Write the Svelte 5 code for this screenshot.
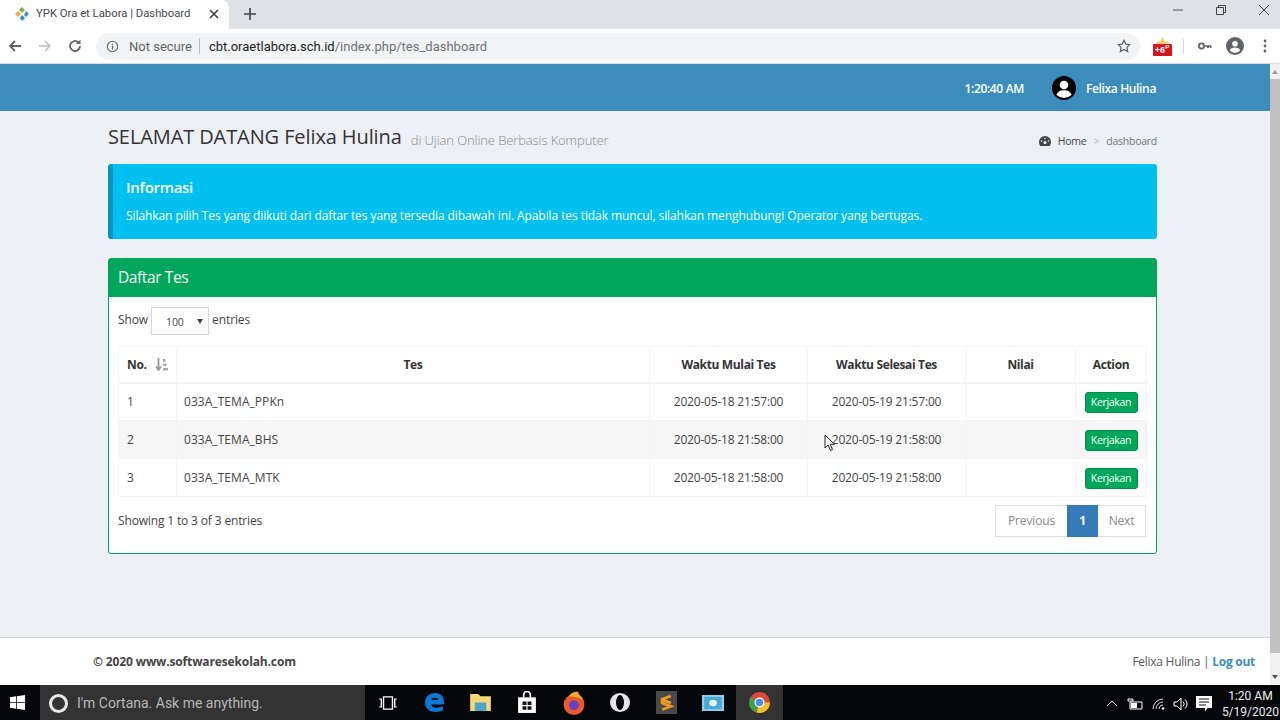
<script>
  const rows = [
    { no: 1, name: '033A_TEMA_PPKn', start: '2020-05-18 21:57:00', end: '2020-05-19 21:57:00' },
    { no: 2, name: '033A_TEMA_BHS', start: '2020-05-18 21:58:00', end: '2020-05-19 21:58:00' },
    { no: 3, name: '033A_TEMA_MTK', start: '2020-05-18 21:58:00', end: '2020-05-19 21:58:00' }
  ];
</script>

<div class="screen">
  <header class="tabstrip">
    <div class="tab">
      <svg class="favicon" viewBox="0 0 16 16" width="16" height="16">
        <path d="M8 1l3 3-3 3-3-3z" fill="#7cb342" />
        <path d="M4 5l3 3-3 3-3-3z" fill="#f2a73b" />
        <path d="M12 5l3 3-3 3-2-2z" fill="#3f8fd2" />
        <path d="M8 9l3 3-3 3-2-3z" fill="#2f86cf" />
      </svg>
      <span class="tabtitle">YPK Ora et Labora | Dashboard</span>
      <svg class="tabclose" viewBox="0 0 10 10" width="10" height="10"><path d="M1 1l8 8M9 1l-8 8" stroke="#3c4043" stroke-width="1.6" /></svg>
    </div>
    <svg class="newtab" viewBox="0 0 12 12" width="12" height="12"><path d="M6 0v12M0 6h12" stroke="#3c4043" stroke-width="1.6" /></svg>
    <div class="winbtns">
      <svg viewBox="0 0 12 12" width="12" height="12"><path d="M1 6h10" stroke="#555" stroke-width="1" /></svg>
      <svg viewBox="0 0 12 12" width="12" height="12"><path d="M1.5 3.5h7v7h-7zM3.5 3.5v-2h7v7h-2" fill="none" stroke="#444" stroke-width="1" /></svg>
      <svg viewBox="0 0 12 12" width="12" height="12"><path d="M1 1l10 10M11 1l-10 10" stroke="#444" stroke-width="1" /></svg>
    </div>
  </header>

  <div class="toolbar">
    <svg class="navicon" viewBox="0 0 16 16" width="16" height="16"><path d="M14 8H3M8 3L3 8l5 5" fill="none" stroke="#5f6368" stroke-width="1.8" /></svg>
    <svg class="navicon" viewBox="0 0 16 16" width="16" height="16"><path d="M2 8h11M8 3l5 5-5 5" fill="none" stroke="#bcbfc4" stroke-width="1.6" /></svg>
    <svg class="navicon" viewBox="0 0 16 16" width="16" height="16"><path d="M13 8a5 5 0 1 1-1.5-3.6" fill="none" stroke="#5f6368" stroke-width="1.8" /><path d="M13.5 1.5v4.5H9z" fill="#5f6368" /></svg>
    <div class="omnibox">
      <svg viewBox="0 0 14 14" width="13" height="13"><circle cx="7" cy="7" r="5.6" fill="none" stroke="#5f6368" stroke-width="1.2" /><path d="M7 6.2v4M7 3.8v1.3" stroke="#5f6368" stroke-width="1.3" /></svg>
      <span class="insecure">Not secure</span>
      <span class="omnisep"></span>
      <span class="url"><b>cbt.oraetlabora.sch.id</b>/index.php/tes_dashboard</span>
      <svg class="star" viewBox="0 0 16 16" width="14" height="14"><path d="M8 1.5l2 4.3 4.7.6-3.4 3.2.9 4.7L8 11.9l-4.2 2.4.9-4.7L1.3 6.4 6 5.8z" fill="none" stroke="#5f6368" stroke-width="1.4" /></svg>
    </div>
    <div class="exts">
      <span class="promo">
        <svg viewBox="0 0 20 8" width="19" height="8"><path d="M3 8l2-3 2 1 3-5 3 5 2-1 2 3z" fill="#f7c766" /></svg>
        <span class="promotag">+6<sup>P</sup></span>
      </span>
      <span class="extsep"></span>
      <svg viewBox="0 0 14 8" width="14" height="8"><circle cx="3.5" cy="4" r="2.6" fill="none" stroke="#5f6368" stroke-width="1.7" /><path d="M6 3.2h7.5v2.8H12V4.800h-1V6H9V4.800H6z" fill="#5f6368" /></svg>
      <svg class="account" viewBox="0 0 18 18" width="18" height="18"><circle cx="9" cy="9" r="9" fill="#5f6368" /><circle cx="9" cy="6.8" r="2.8" fill="#fff" /><path d="M3.8 13.2c1-2 3.2-2.6 5.2-2.6s4.2.6 5.2 2.6A6.8 6.8 0 0 1 9 16a6.8 6.8 0 0 1-5.200-2.800z" fill="#fff" /></svg>
      <svg class="dots" viewBox="0 0 4 14" width="4" height="14"><circle cx="2" cy="2" r="1.4" fill="#5f6368" /><circle cx="2" cy="7" r="1.4" fill="#5f6368" /><circle cx="2" cy="12" r="1.4" fill="#5f6368" /></svg>
    </div>
  </div>

  <div class="viewport">
    <div class="page">
      <nav class="navbar">
        <span class="clock">1:20:40 AM</span>
        <svg class="avatar" viewBox="0 0 24 24" width="24" height="24"><circle cx="12" cy="12" r="12" fill="#000" /><circle cx="12" cy="9" r="4.300" fill="#fff" /><path d="M4.500 19c1-3.500 4-4.800 7.500-4.800s6.500 1.300 7.500 4.800a11 11 0 0 1-15 0z" fill="#fff" /></svg>
        <span class="username">Felixa Hulina</span>
      </nav>

      <main class="content">
        <div class="headline">
          <h1>SELAMAT DATANG Felixa Hulina <small>di Ujian Online Berbasis Komputer</small></h1>
          <div class="crumbs">
            <svg viewBox="0 0 12 10" width="12" height="10"><path d="M6 0a6 6 0 0 0-6 6c0 1.500.5 3 1.500 4h9c1-1 1.500-2.500 1.500-4a6 6 0 0 0-6-6z" fill="#444" /><circle cx="6" cy="6.500" r="1.500" fill="#ecf0f5" /><circle cx="2.500" cy="5" r=".8" fill="#ecf0f5" /><circle cx="9.500" cy="5" r=".8" fill="#ecf0f5" /><circle cx="6" cy="2.500" r=".8" fill="#ecf0f5" /></svg>
            <span class="home">Home</span>
            <span class="gt">&gt;</span>
            <span class="here">dashboard</span>
          </div>
        </div>

        <section class="callout">
          <h4>Informasi</h4>
          <p>Silahkan pilih Tes yang diikuti dari daftar tes yang tersedia dibawah ini. Apabila tes tidak muncul, silahkan menghubungi Operator yang bertugas.</p>
        </section>

        <section class="box">
          <h3 class="boxhead">Daftar Tes</h3>
          <div class="boxbody">
            <div class="length">
              <span class="lbl">Show</span>
              <span class="select">100 <i class="caret"></i></span>
              <span class="lbl">entries</span>
            </div>
            <table>
              <colgroup>
                <col class="c1" /><col class="c2" /><col class="c3" /><col class="c4" /><col class="c5" /><col class="c6" />
              </colgroup>
              <thead>
                <tr>
                  <th class="left">
                    <span class="thno">No.
                      <svg viewBox="0 0 13 13" width="13" height="13"><path d="M3.500 0v11M1 8.500L3.500 12 6 8.500" fill="none" stroke="#999" stroke-width="1.800" /><path d="M8 1h2.500v3H8zM8 5.500h3.500v2.500H8zM8 10h5v2.500H8z" fill="#aaa" /></svg>
                    </span>
                  </th>
                  <th>Tes</th>
                  <th>Waktu Mulai Tes</th>
                  <th>Waktu Selesai Tes</th>
                  <th>Nilai</th>
                  <th>Action</th>
                </tr>
              </thead>
              <tbody>
                {#each rows as r}
                  <tr>
                    <td class="num">{r.no}</td>
                    <td class="name">{r.name}</td>
                    <td class="mid">{r.start}</td>
                    <td class="mid">{r.end}</td>
                    <td></td>
                    <td class="mid"><button class="work">Kerjakan</button></td>
                  </tr>
                {/each}
              </tbody>
            </table>
            <div class="tablefoot">
              <span class="info">Showing 1 to 3 of 3 entries</span>
              <div class="pager">
                <span class="pg first">Previous</span>
                <span class="pg active">1</span>
                <span class="pg last">Next</span>
              </div>
            </div>
          </div>
        </section>
      </main>

      <footer class="footer">
        <strong>© 2020 www.softwaresekolah.com</strong>
        <span class="who">Felixa Hulina | <b>Log out</b></span>
      </footer>

      <svg class="cursor" viewBox="0 0 12 18" width="12" height="18"><path d="M1 1v13l3.200-3 2.300 5.500 2-.9-2.300-5.300H10.500z" fill="#fff" stroke="#222" stroke-width="1" /></svg>
    </div>

    <aside class="scrollbar">
      <i class="up"></i>
      <div class="thumb"></div>
      <i class="down"></i>
    </aside>
  </div>

  <footer class="taskbar">
    <span class="start">
      <svg viewBox="0 0 16 16" width="15" height="15"><path d="M0 2.300l6.500-.9v6.200H0zM7.300 1.300L16 0v7.600H7.300zM0 8.400h6.500v6.200L0 13.700zM7.300 8.400H16V16l-8.700-1.300z" fill="#fff" /></svg>
    </span>
    <div class="cortana">
      <span class="ring"></span>
      <span>I'm Cortana. Ask me anything.</span>
    </div>
    <div class="apps">
      <span class="app"><svg viewBox="0 0 18 16" width="20" height="14" preserveAspectRatio="none"><path d="M5 1h8v14H5zM1 3.500h2v9H1M17 3.500h-2v9h2" fill="none" stroke="#fff" stroke-width="1.200" /></svg></span>
      <span class="app"><svg viewBox="0 0 20 22" width="21" height="21" preserveAspectRatio="none"><path d="M1 11C1 4 6 1 11 1c5 0 8 4 8 10v2H7c.5 3.500 5.500 4.500 11 2v4.500c-7 3-17 1.500-17-8.500zM7 8.500h6.500C13.500 5.500 7.800 5.200 7 8.500z" fill="#0a78d4" /></svg></span>
      <span class="app"><svg viewBox="0 0 20 18" width="23" height="19" preserveAspectRatio="none"><path d="M1 1h7l2 2h9v14H1z" fill="#f8d876" /><path d="M5 9h10v8H5z" fill="#48a6c9" /></svg></span>
      <span class="app"><svg viewBox="0 0 18 22" width="20" height="23" preserveAspectRatio="none"><path d="M1 6h16v15H1z" fill="#fff" /><path d="M6 6V3.500a3 3 0 0 1 6 0V6" fill="none" stroke="#fff" stroke-width="1.500" /><path d="M5 10h3.500v3.500H5zM9.500 10H13v3.500H9.500zM5 14.500h3.500V18H5zM9.500 14.500H13V18H9.500z" fill="#111" /></svg></span>
      <span class="app"><svg viewBox="0 0 22 22" width="24" height="24"><circle cx="11" cy="12.500" r="9.500" fill="#ea5a2d" /><path d="M6 5c2-3 6-5 9-4-1 2 3 3 5 8-3-3-8-4-14-4z" fill="#fca926" /><circle cx="11" cy="13" r="4.500" fill="#6b3fc4" /></svg></span>
      <span class="app"><span class="opera"></span></span>
      <span class="app"><svg viewBox="0 0 17 21" width="21" height="23" preserveAspectRatio="none"><path d="M0 0h17v21H0z" fill="#4a4a4a" /><path d="M12 4.500L5 7.500v3.500l7 3-7 3M5 8l7 3" fill="none" stroke="#f49b1c" stroke-width="2.400" /></svg></span>
      <span class="app"><svg viewBox="0 0 20 17" width="22" height="16" preserveAspectRatio="none"><path d="M0 0h20v17H0z" fill="#8fd0ea" /><path d="M2 2h16v13H2z" fill="#4aa8d8" /><circle cx="10" cy="8.500" r="3.500" fill="#e8f5fb" /></svg></span>
      <span class="app current"><svg viewBox="0 0 22 22" width="23" height="23"><circle cx="11" cy="11" r="10" fill="#d94a3a" /><path d="M11 11L21 11A10 10 0 0 1 8 20.500z" fill="#f6c02c" /><path d="M11 11L8 20.500A10 10 0 0 1 2.300 6z" fill="#3c9f4a" /><circle cx="11" cy="11" r="4.800" fill="#fff" /><circle cx="11" cy="11" r="3.600" fill="#4a8fe8" /></svg></span>
    </div>
    <div class="tray">
      <svg viewBox="0 0 12 7" width="12" height="7"><path d="M1 6l5-5 5 5" fill="none" stroke="#fff" stroke-width="1" /></svg>
      <svg viewBox="0 0 16 12" width="16" height="12"><path d="M3 4h12v7H3zM1 1h5v2H1z" fill="none" stroke="#fff" stroke-width="1" /><path d="M4 5h6v5H4z" fill="#fff" /></svg>
      <svg viewBox="0 0 14 12" width="14" height="12"><path d="M1 11a10 10 0 0 1 10-10M4 11a7 7 0 0 1 7-7M7 11a4 4 0 0 1 4-4" fill="none" stroke="#ddd" stroke-width="1" /><circle cx="11" cy="10.500" r="1.300" fill="#fff" /></svg>
      <svg class="speaker" viewBox="0 0 16 14" width="16" height="14"><path d="M1 5h3l4-4v12l-4-4H1zM10 4.500a3.500 3.500 0 0 1 0 5M12 2.500a6 6 0 0 1 0 9" fill="none" stroke="#fff" stroke-width="1" /></svg>
      <svg class="note" viewBox="0 0 16 16" width="16" height="16"><path d="M0 0h16v12h-4.500L9 15.500V12H0z" fill="#fff" /><path d="M3 3h10M3 6h10M3 9h7" stroke="#111" stroke-width="1" /></svg>
      <div class="time"><span>1:20 AM</span><span>5/19/2020</span></div>
    </div>
  </footer>
</div>

<style>
  :global(body) { margin: 0; }
  .screen {
    width: 1280px; height: 720px; overflow: hidden;
    display: flex; flex-direction: column;
    font-family: "Open Sans", "Noto Sans", sans-serif;
    color: #333;
  }

  .tabstrip { height: 29px; flex: none; background: #dee1e6; display: flex; align-items: flex-end; box-sizing: border-box; }
  .tab {
    width: 229px; height: 29px; box-sizing: border-box;
    background: #fff; border-radius: 0 8px 0 0;
    display: flex; align-items: center; padding: 0 10px 2px 14px;
  }
  .favicon { flex: none; margin-right: 6px; }
  .tabtitle { font: 11.3px "Roboto", sans-serif; color: #45484c; flex: 1; white-space: nowrap; }
  .newtab { margin: 0 0 9px 15px; }
  .winbtns { margin-left: auto; display: flex; gap: 31px; align-self: flex-start; padding: 4px 10px 0 0; }

  .toolbar { height: 35px; flex: none; background: #fff; display: flex; align-items: center; padding-left: 7px; box-sizing: border-box; border-bottom: 1px solid #d8dade; }
  .navicon { flex: none; margin-right: 14px; }
  .omnibox {
    width: 1044px; height: 27px; box-sizing: border-box; margin-left: -1px;
    background: #f1f3f4; border-radius: 14px;
    display: flex; align-items: center; padding: 0 9px 0 10px;
    font: 13px "Roboto", sans-serif; white-space: nowrap;
  }
  .insecure { color: #5f6368; margin-left: 10px; font-size: 13px; }
  .omnisep { width: 1px; height: 16px; background: #b8bbbf; margin: 0 9px 0 7px; }
  .url { color: #6f7377; flex: 1; }
  .url b { font-weight: 400; color: #202124; }
  .star { margin-left: auto; }
  .exts { display: flex; align-items: center; margin-left: 12px; }
  .promo { width: 20px; display: flex; flex-direction: column; align-items: center; margin-right: 11px; }
  .promotag { display: block; width: 19px; height: 12px; background: #d9131e; color: #fff; font: 700 9px/12px "Liberation Sans", sans-serif; text-align: center; border-radius: 1px; }
  .promotag sup { font-size: 6px; line-height: 0; }
  .extsep { width: 1px; height: 15px; background: #d6d8da; margin-right: 14px; }
  .account { margin-left: 14px; }
  .dots { margin-left: 19px; }

  .viewport { flex: 1; min-height: 0; display: flex; }
  .page { flex: 1; min-width: 0; display: flex; flex-direction: column; background: #ecf0f5; position: relative; }
  .navbar {
    height: 47px; flex: none; box-sizing: border-box; background: #3c8dbc; color: #fff;
    display: flex; align-items: center; padding: 1px 114px 0 0;
    justify-content: flex-end; font-size: 12px; font-weight: 600;
    letter-spacing: -0.35px;
  }
  .clock { margin-right: 28px; }
  .avatar { margin-right: 10px; margin-top: -1px; }

  .content { flex: 1; min-height: 0; padding: 0 113px 0 108px; }
  .headline { height: 53px; display: flex; align-items: flex-end; justify-content: space-between; padding-bottom: 10px; box-sizing: border-box; }
  h1 { margin: 0; font-size: 20px; line-height: 28px; font-weight: 400; color: #333; letter-spacing: -0.1px; white-space: nowrap; }
  h1 small { font-size: 13px; font-weight: 300; color: #8a8a8a; margin-left: 4px; letter-spacing: -0.1px; vertical-align: -1px; }
  .crumbs { display: flex; align-items: center; font-size: 10.5px; color: #777; padding: 0 0 6px 0; letter-spacing: -0.25px; }
  .crumbs svg { margin-right: 7px; }
  .home { color: #444; }
  .gt { color: #bbb; margin: 0 7px; }
  .here { color: #777; }

  .callout {
    height: 75px; box-sizing: border-box; background: #00c0ef; color: #fff;
    border-left: 5px solid #0097bc; border-radius: 3px; padding: 13px 18px 0 13px;
    margin-bottom: 19px;
  }
  .callout h4 { margin: 0 0 10px; font-size: 15px; line-height: 20px; font-weight: 600; letter-spacing: -0.3px; }
  .callout p { margin: 0; font-size: 12px; line-height: 17px; font-weight: 500; letter-spacing: -0.08px; white-space: nowrap; }

  .box { background: #fff; border: 1px solid #00a65a; border-radius: 3px; height: 296px; box-sizing: border-box; }
  .boxhead { margin: 0; height: 38px; background: #00a65a; color: #fff; font-size: 15.5px; font-weight: 400; line-height: 37px; padding-left: 9px; letter-spacing: -0.4px; }
  .boxbody { padding: 9px 10px 0 9px; }
  .length { display: flex; align-items: center; gap: 3px; height: 29px; font-size: 12px; color: #444; letter-spacing: -0.1px; }
  .lbl { padding-bottom: 2px; }
  .select { width: 58px; height: 28px; box-sizing: border-box; border: 1px solid #d2d6de; padding: 3px 0 0 14px; font-size: 10.5px; display: flex; align-items: center; position: relative; color: #444; }
  .caret { position: absolute; right: 5px; top: 11px; border: 3.5px solid transparent; border-top: 5px solid #444; border-bottom: 0; }

  table { width: 1028px; margin-top: 11px; border-collapse: collapse; table-layout: fixed; font-size: 12px; color: #444; letter-spacing: -0.2px; }
  .c1 { width: 58px; } .c2 { width: 473px; } .c3 { width: 158px; } .c4 { width: 158px; } .c5 { width: 110px; } .c6 { width: 71px; }
  th, td { border: 1px solid #f4f4f4; padding: 0; box-sizing: border-box; }
  th { height: 36px; border-bottom: 2px solid #f4f4f4; font-weight: 700; text-align: center; color: #333; letter-spacing: -0.35px; }
  th.left { text-align: left; padding-left: 8px; }
  .thno { display: flex; align-items: center; gap: 8px; }
  td { height: 38px; }
  tbody tr:nth-child(2) { background: #f6f6f6; }
  .num { padding-left: 8px; }
  .name { padding-left: 7px; letter-spacing: 0.05px; }
  .mid { text-align: center; }
  .work { width: 53px; height: 21px; padding: 0; border: 1px solid #008d4c; border-radius: 3px; background: #00a65a; color: #fff; font: 500 10.5px "Open Sans", sans-serif; letter-spacing: -0.3px; display: block; margin: 1px auto 0; }

  .tablefoot { display: flex; justify-content: space-between; align-items: center; margin-top: 8px; font-size: 12px; color: #444; letter-spacing: -0.15px; }
  .info { padding-bottom: 2px; }
  .pager { display: flex; }
  .pg { height: 32px; box-sizing: border-box; border: 1px solid #ddd; color: #888; line-height: 30px; text-align: center; background: #fff; }
  .first { width: 72px; border-right: 0; }
  .active { width: 31px; background: #337ab7; border-color: #337ab7; color: #fff; font-weight: 700; }
  .last { width: 48px; border-left: 0; }

  .footer {
    height: 48px; flex: none; box-sizing: border-box; background: #fff; border-top: 1px solid #d2d6de;
    display: flex; align-items: center; justify-content: space-between;
    padding: 0 15px 0 93px; font-size: 12px; color: #444;
  }
  .footer strong { letter-spacing: -0.13px; }
  .who { color: #555; letter-spacing: -0.27px; }
  .who b { color: #3c8dbc; }
  .cursor { position: absolute; left: 824px; top: 370px; }

  .scrollbar { width: 10px; flex: none; background: #f1f1f1; display: flex; flex-direction: column; align-items: center; }
  .thumb { height: 574px; width: 100%; background: #c1c1c1; margin: 5px 0 auto; }
  .up { margin-top: 6px; border: 3.5px solid transparent; border-bottom: 4px solid #9a9a9a; border-top: 0; }
  .down { margin-bottom: 6px; border: 3.5px solid transparent; border-top: 4px solid #505050; border-bottom: 0; }

  .taskbar { height: 35px; flex: none; background: #05060a; display: flex; align-items: center; color: #fff; }
  .start { width: 40px; box-sizing: border-box; padding-right: 6px; display: flex; justify-content: center; flex: none; }
  .cortana { width: 325px; height: 35px; box-sizing: border-box; background: #333; display: flex; align-items: center; padding: 1px 0 0 9px; gap: 9px; font: 14px "Roboto", sans-serif; color: #b8b8b8; flex: none; }
  .ring { width: 13px; height: 13px; border: 3px solid #e9e9e9; border-radius: 50%; box-sizing: content-box; }
  .apps { display: flex; align-items: center; height: 100%; }
  .app { width: 46.4px; height: 35px; display: flex; align-items: center; justify-content: center; }
  .current { background: #333; }
  .opera { width: 8px; height: 15px; border-style: solid; border-color: #e6e6e6; border-width: 2px 6px; border-radius: 50%; }
  .tray { margin-left: auto; display: flex; align-items: center; gap: 9px; padding: 2px 1px 0 0; }
  .speaker { margin-left: -2px; }
  .note { margin: 0 1px 0 -2px; }
  .time { display: flex; flex-direction: column; align-items: center; font: 12px/16px "Roboto", sans-serif; color: #eee; }
</style>
